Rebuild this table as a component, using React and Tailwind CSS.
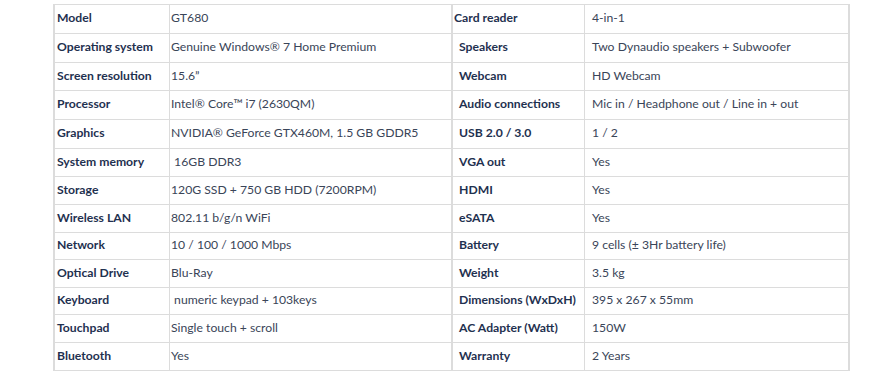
const rows = [
  ['Model', 'GT680', 'Card reader', '4-in-1', 29],
  ['Operating system', 'Genuine Windows® 7 Home Premium', 'Speakers', 'Two Dynaudio speakers + Subwoofer', 29],
  ['Screen resolution', '15.6”', 'Webcam', 'HD Webcam', 28],
  ['Processor', 'Intel® Core™ i7 (2630QM)', 'Audio connections', 'Mic in / Headphone out / Line in + out', 29],
  ['Graphics', 'NVIDIA® GeForce GTX460M, 1.5 GB GDDR5', 'USB 2.0 / 3.0', '1 / 2', 29],
  ['System memory', ' 16GB DDR3', 'VGA out', 'Yes', 28],
  ['Storage', '120G SSD + 750 GB HDD (7200RPM)', 'HDMI', 'Yes', 28],
  ['Wireless LAN', '802.11 b/g/n WiFi', 'eSATA', 'Yes', 28],
  ['Network', '10 / 100 / 1000 Mbps', 'Battery', '9 cells (± 3Hr battery life)', 27],
  ['Optical Drive', 'Blu-Ray', 'Weight', '3.5 kg', 28],
  ['Keyboard', ' numeric keypad + 103keys', 'Dimensions (WxDxH)', '395 x 267 x 55mm', 27],
  ['Touchpad', 'Single touch + scroll', 'AC Adapter (Watt)', '150W', 28],
  ['Bluetooth', 'Yes', 'Warranty', '2 Years', 28],
]

function App() {
  return (
    <div className="min-h-screen bg-white pt-[4px] pl-[53px] font-['Lato',sans-serif] text-[12.2px]">
      <div className="w-[797px] border-t border-l-2 border-r-2 border-[#dcdcdc]">
        {rows.map((r, i) => (
          <div
            key={i}
            className="flex border-b border-[#dcdcdc]"
            style={{ height: r[4] }}
          >
            <div className="w-[115px] shrink-0 flex items-center pl-[2px] pb-[1px] border-r border-[#dcdcdc] font-bold text-[#1f3150]">
              {r[0]}
            </div>
            <div className="w-[283px] shrink-0 flex items-center pl-[1px] pb-[1px] border-r-2 border-[#dcdcdc] text-[#3a4558] whitespace-pre">
              {r[1]}
            </div>
            <div className={`w-[132px] shrink-0 flex items-center pb-[1px] border-r border-[#dcdcdc] font-bold text-[#1f3150] ${i === 0 ? 'pl-[1px]' : 'pl-[6px]'}`}>
              {r[2]}
            </div>
            <div className="flex-1 flex items-center pl-[7px] pb-[1px] text-[#3a4558]">
              {r[3]}
            </div>
          </div>
        ))}
      </div>
    </div>
  )
}

export default App
